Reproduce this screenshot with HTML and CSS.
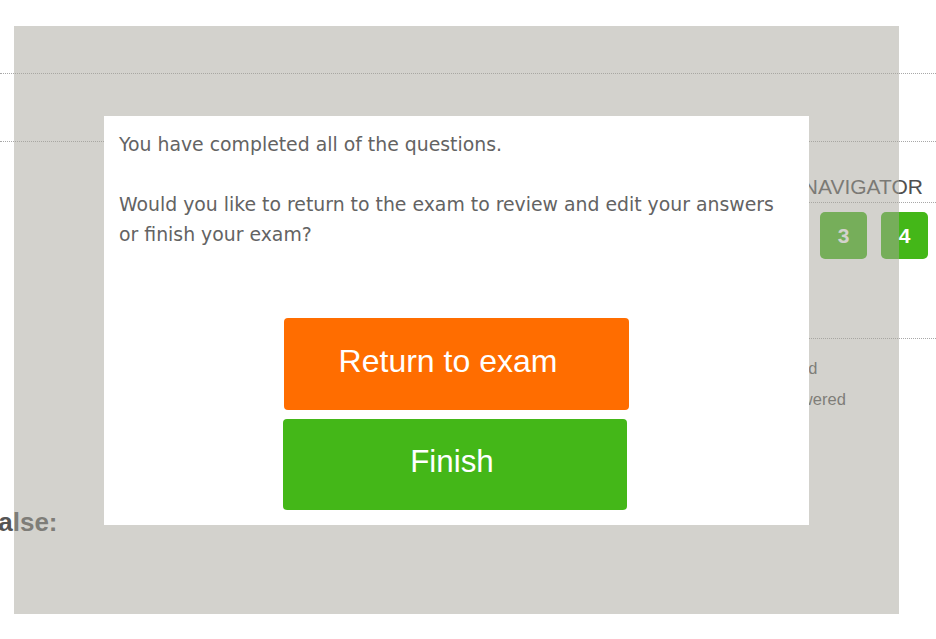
FILE: index.html
```html
<!DOCTYPE html>
<html lang="en">
<head>
<meta charset="utf-8">
<title>Exam complete</title>
<link rel="stylesheet" href="styles.css">
</head>
<body>
<div class="page">
  <header class="topbar"></header>
  <div class="subbar"></div>
  <div class="content">
    <main class="main">
      <h2 class="question-title">True or False:</h2>
    </main>
    <aside class="sidebar">
      <h3 class="nav-title">QUIZ NAVIGATOR</h3>
      <div class="nav-boxes">
        <span class="nav-box">1</span>
        <span class="nav-box">2</span>
        <span class="nav-box">3</span>
        <span class="nav-box">4</span>
      </div>
      <div class="nav-spacer"></div>
      <ul class="legend">
        <li>Answered</li>
        <li>Not answered</li>
      </ul>
    </aside>
  </div>
</div>

<div class="overlay"></div>

<div class="modal" role="dialog">
  <p class="modal-text">You have completed all of the questions.<br><br>Would you like to return to the exam to review and edit your answers<br>or finish your exam?</p>
  <div class="modal-actions">
    <button class="btn btn-return">Return to exam</button>
    <button class="btn btn-finish">Finish</button>
  </div>
</div>
</body>
</html>
```
FILE: styles.css
```css
html, body {
  margin: 0;
  padding: 0;
  background: #ffffff;
  overflow: hidden;
  width: 936px;
  height: 639px;
}

body {
  font-family: "Liberation Sans", Arial, sans-serif;
  color: #555555;
}

.page {
  width: 936px;
}

.topbar {
  height: 73px;
  border-bottom: 1px dotted #a8a8a8;
}

.subbar {
  height: 67px;
  border-bottom: 1px dotted #a8a8a8;
}

.content {
  display: flex;
}

.main {
  flex: 1;
}

.question-title {
  margin: 365px 0 0 -113px;
  font-size: 26px;
  line-height: 30px;
  font-weight: bold;
  color: #555555;
  white-space: nowrap;
}

.sidebar {
  width: 246px;
  display: flex;
  flex-direction: column;
}

.nav-title {
  margin: 0;
  padding: 33px 13px 3px 0;
  font-size: 21px;
  line-height: 24px;
  font-weight: normal;
  text-align: right;
  color: #4f4f4f;
  border-bottom: 1px dotted #a8a8a8;
  white-space: nowrap;
}

.nav-boxes {
  display: flex;
  justify-content: flex-end;
  gap: 14px;
  padding: 9px 8px 0 0;
}

.nav-box {
  width: 47px;
  height: 47px;
  border-radius: 5px;
  background: #44b718;
  color: #ffffff;
  font-weight: bold;
  font-size: 21px;
  display: flex;
  align-items: center;
  justify-content: center;
}

.nav-spacer {
  height: 79px;
  border-bottom: 1px dotted #a8a8a8;
}

.legend {
  list-style: none;
  margin: 0;
  padding: 14px 0 0 54px;
  font-size: 16.5px;
  line-height: 31px;
  color: #555555;
}

.overlay {
  position: absolute;
  left: 14px;
  top: 26px;
  width: 885px;
  height: 588px;
  background: rgba(167, 165, 155, 0.5);
}

.modal {
  position: absolute;
  left: 104px;
  top: 116px;
  width: 705px;
  height: 409px;
  box-sizing: border-box;
  padding: 14px 15px 15px 15px;
  background: #ffffff;
  display: flex;
  flex-direction: column;
}

.modal-text {
  margin: 0;
  font-family: "DejaVu Sans", Verdana, sans-serif;
  font-size: 18.85px;
  line-height: 30px;
  color: #636363;
}

.modal-actions {
  margin-top: auto;
  display: flex;
  flex-direction: column;
  align-items: center;
  gap: 9px;
}

.btn {
  width: 345px;
  border: none;
  border-radius: 4px;
  color: #ffffff;
  font-family: "Liberation Sans", Arial, sans-serif;
  padding: 0 0 6px 0;
  cursor: pointer;
}

.btn-return {
  height: 92px;
  background: #ff6d00;
  font-size: 32px;
  padding-right: 17px;
}

.btn-finish {
  width: 344px;
  height: 91px;
  margin-right: 3px;
  background: #44b718;
  font-size: 31.3px;
  padding-right: 6px;
}
```
